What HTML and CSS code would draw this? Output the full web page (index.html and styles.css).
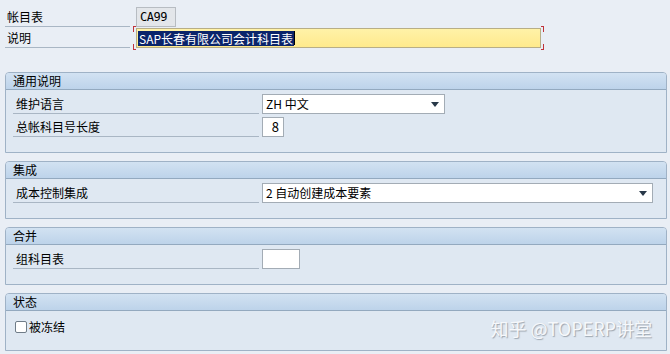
FILE: index.html
```html
<!DOCTYPE html>
<html lang="zh">
<head>
  <meta charset="UTF-8" />
  <title>帐目表</title>
  <link rel="stylesheet" href="styles.css">
</head>
<body>
  <div class="head">
    <div class="row">
      <div class="label top-label">帐目表</div>
      <div class="field ro">CA99</div>
    </div>
    <div class="row">
      <div class="label top-label">说明</div>
      <div class="req">
        <div class="field desc"><span class="sel">SAP长春有限公司会计科目表</span><span class="caret"></span></div>
      </div>
    </div>
  </div>

  <div class="group">
    <div class="group-title">通用说明</div>
    <div class="group-body tall">
      <div class="row">
        <div class="label">维护语言</div>
        <div class="field combo lang">ZH 中文<span class="arrow"></span></div>
      </div>
      <div class="row">
        <div class="label">总帐科目号长度</div>
        <div class="field num">8</div>
      </div>
    </div>
  </div>

  <div class="group">
    <div class="group-title">集成</div>
    <div class="group-body">
      <div class="row">
        <div class="label">成本控制集成</div>
        <div class="field combo wide">2 自动创建成本要素<span class="arrow"></span></div>
      </div>
    </div>
  </div>

  <div class="group">
    <div class="group-title">合并</div>
    <div class="group-body">
      <div class="row">
        <div class="label">组科目表</div>
        <div class="field small"></div>
      </div>
    </div>
  </div>

  <div class="group">
    <div class="group-title">状态</div>
    <div class="group-body">
      <div class="check-row">
        <span class="box"></span>被冻结
      </div>
    </div>
    <div class="watermark">知乎 @TOPERP讲堂</div>
  </div>
</body>
</html>
```

FILE: styles.css
```css
* { box-sizing: border-box; }
body {
  margin: 0;
  width: 670px;
  height: 354px;
  overflow: hidden;
  background: #e9eef5;
  font-family: "Noto Sans CJK SC", "Liberation Sans", sans-serif;
  font-size: 12px;
  color: #000;
}
.head {
  padding: 6px 0 0 5px;
  height: 72px;
}
.row {
  display: flex;
  align-items: flex-end;
  height: 21px;
}
.label {
  width: 246px;
  height: 19px;
  line-height: 18px;
  padding-left: 3px;
  border-bottom: 1px solid #a9b6c4;
  margin-right: 3px;
  white-space: nowrap;
}
.top-label {
  width: 125px;
  padding-left: 2px;
}
.field {
  height: 20px;
  line-height: 18px;
  border: 1px solid #a3acb5;
  background: #fff;
  padding: 0 3px;
  white-space: nowrap;
}
.ro {
  width: 40px;
  margin-left: 3px;
  background: #e3e6ea;
  border-color: #b7bcc2;
  font-family: "DejaVu Sans Mono", monospace;
  font-size: 12px;
  letter-spacing: -0.5px;
}
.req {
  position: relative;
  margin-left: 3px;
}
/* red corner marks of a required field */
.req::before,
.req::after {
  content: "";
  position: absolute;
  width: 3px;
  height: 24px;
  top: -2px;
  background:
    linear-gradient(#c0333a, #c0333a) 0 0 / 3px 1px no-repeat,
    linear-gradient(#c0333a, #c0333a) 0 100% / 3px 1px no-repeat;
}
.req::before {
  left: -3px;
  background:
    linear-gradient(#c0333a, #c0333a) 0 0 / 3px 1px no-repeat,
    linear-gradient(#c0333a, #c0333a) 0 0 / 1px 6px no-repeat,
    linear-gradient(#c0333a, #c0333a) 0 100% / 3px 1px no-repeat,
    linear-gradient(#c0333a, #c0333a) 0 100% / 1px 6px no-repeat;
}
.req::after {
  right: -3px;
  background:
    linear-gradient(#c0333a, #c0333a) 0 0 / 3px 1px no-repeat,
    linear-gradient(#c0333a, #c0333a) 100% 0 / 1px 6px no-repeat,
    linear-gradient(#c0333a, #c0333a) 0 100% / 3px 1px no-repeat,
    linear-gradient(#c0333a, #c0333a) 100% 100% / 1px 6px no-repeat;
}
.desc {
  width: 405px;
  background: linear-gradient(#fff2a8, #ffea8c);
  border-color: #b8ae86;
  padding-left: 1px;
  display: flex;
  align-items: center;
}
.sel {
  background: #0a246a;
  color: #fff;
  line-height: 15px;
  padding: 0 1px;
}
.caret {
  display: inline-block;
  width: 1px;
  height: 14px;
  background: #000;
}
.group {
  position: relative;
  margin: 0 3px 8px 5px;
  border: 1px solid #9fb2c6;
  border-radius: 4px 4px 0 0;
  background: #dfe8f2;
}
.group-title {
  height: 17px;
  line-height: 15px;
  padding-left: 7px;
  border-bottom: 1px solid #93a9bf;
  border-radius: 3px 3px 0 0;
  background: linear-gradient(#d2e2f2, #bdd3ea);
}
.group-body {
  height: 39px;
  padding: 4px 0 0 7px;
}
.group-body.tall { height: 62px; }
.group .row { height: 23px; align-items: flex-start; }
.group .label { height: 20px; line-height: 20px; }
.group .field { height: 20px; }
.combo {
  position: relative;
  padding-right: 18px;
}
.lang { width: 183px; }
.wide { width: 391px; }
.num {
  width: 22px;
  text-align: right;
  padding-right: 4px;
  font-size: 13px;
}
.small { width: 38px; }
.arrow {
  position: absolute;
  right: 5px;
  top: 7px;
  width: 0;
  height: 0;
  border-left: 4px solid transparent;
  border-right: 4px solid transparent;
  border-top: 5px solid #283848;
}
.check-row {
  display: flex;
  align-items: center;
  padding: 4px 0 0 2px;
  line-height: 16px;
}
.box {
  width: 12px;
  height: 12px;
  border: 1px solid #6f7c88;
  border-radius: 2px;
  background: #fff;
  margin-right: 2px;
}
.watermark {
  position: absolute;
  right: 14px;
  top: 21px;
  font-size: 18px;
  color: #f6f8fb;
  text-shadow: 1px 1px 1px rgba(90, 100, 110, 0.5);
}
```
